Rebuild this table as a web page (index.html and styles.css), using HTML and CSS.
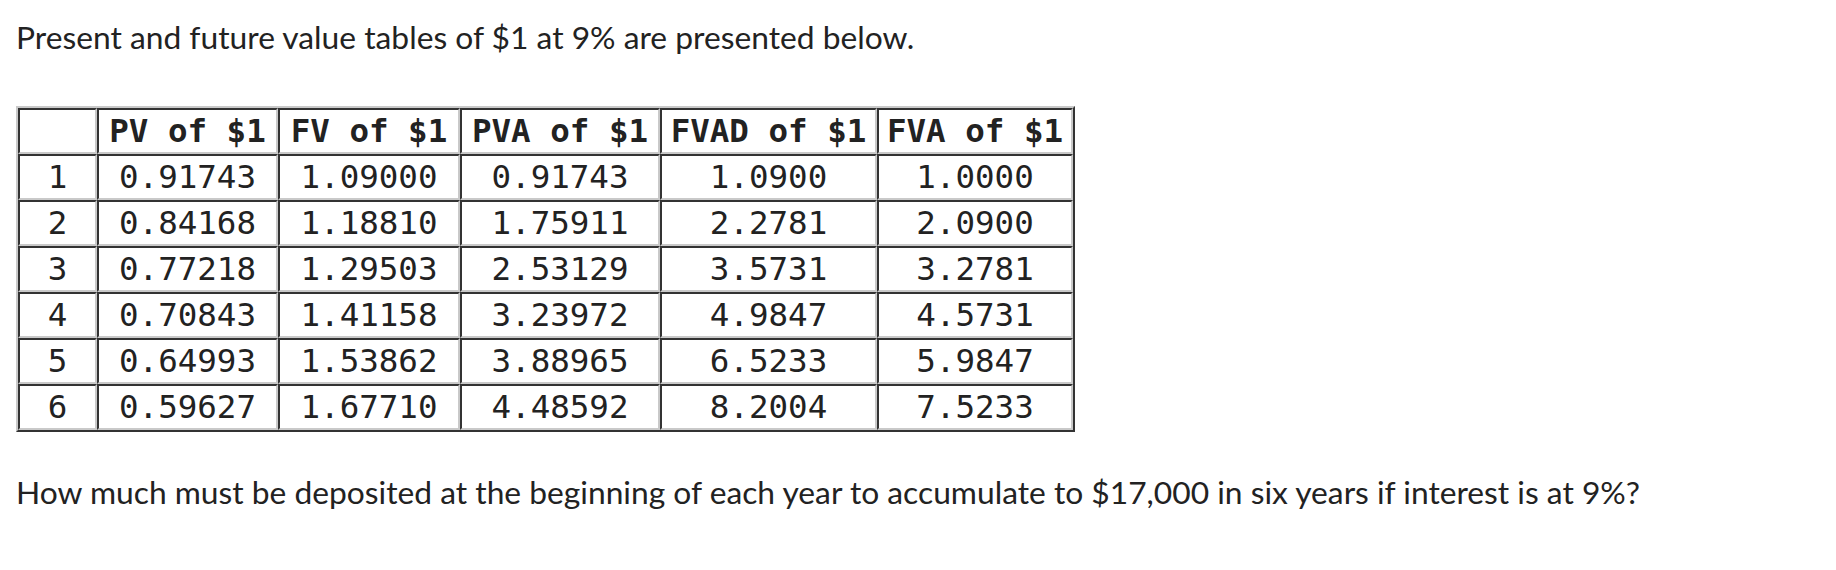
FILE: index.html
```html
<!DOCTYPE html>
<html>
<head>
<meta charset="utf-8">
<link rel="stylesheet" href="styles.css">
</head>
<body>
<div class="page">
  <p class="lead">Present and future value tables of $1 at 9% are presented below.</p>
  <table class="tv">
    <colgroup>
      <col class="c0"><col class="c1"><col class="c2"><col class="c3"><col class="c4"><col class="c5">
    </colgroup>
    <thead>
      <tr><th></th><th>PV of $1</th><th>FV of $1</th><th>PVA of $1</th><th>FVAD of $1</th><th>FVA of $1</th></tr>
    </thead>
    <tbody>
      <tr><td>1</td><td>0.91743</td><td>1.09000</td><td>0.91743</td><td>1.0900</td><td>1.0000</td></tr>
      <tr><td>2</td><td>0.84168</td><td>1.18810</td><td>1.75911</td><td>2.2781</td><td>2.0900</td></tr>
      <tr><td>3</td><td>0.77218</td><td>1.29503</td><td>2.53129</td><td>3.5731</td><td>3.2781</td></tr>
      <tr><td>4</td><td>0.70843</td><td>1.41158</td><td>3.23972</td><td>4.9847</td><td>4.5731</td></tr>
      <tr><td>5</td><td>0.64993</td><td>1.53862</td><td>3.88965</td><td>6.5233</td><td>5.9847</td></tr>
      <tr><td>6</td><td>0.59627</td><td>1.67710</td><td>4.48592</td><td>8.2004</td><td>7.5233</td></tr>
    </tbody>
  </table>
  <p class="question">How much must be deposited at the beginning of each year to accumulate to $17,000 in six years if interest is at 9%?</p>
</div>
</body>
</html>
```

FILE: styles.css
```css
html, body {
  margin: 0;
  padding: 0;
  background: #ffffff;
}
.page {
  padding: 17px 0 0 16px;
  font-family: "Lato", "Liberation Sans", sans-serif;
  color: #222222;
}
.lead, .question {
  margin: 0;
  font-size: 31.75px;
  line-height: 40px;
}
.tv {
  margin-top: 49px;
  border-collapse: separate;
  border-spacing: 0;
  table-layout: fixed;
  width: 1059px;
  border-top: 2px solid #c9c9c9;
  border-left: 2px solid #c9c9c9;
  border-right: 2px solid #333333;
  border-bottom: 2px solid #333333;
  font-family: "DejaVu Sans Mono", "Liberation Mono", monospace;
  font-size: 32.5px;
  color: #222222;
}
.c0 { width: 79px; }
.c1 { width: 181px; }
.c2 { width: 182px; }
.c3 { width: 200px; }
.c4 { width: 217px; }
.c5 { width: 196px; }
.tv th, .tv td {
  height: 42px;
  padding: 0;
  text-align: center;
  vertical-align: middle;
  border-top: 2px solid #333333;
  border-left: 2px solid #333333;
  border-right: 2px solid #c9c9c9;
  border-bottom: 2px solid #c9c9c9;
  line-height: 36px;
  white-space: nowrap;
}
.tv th {
  font-weight: bold;
}
.question {
  margin-top: 40px;
}
```
